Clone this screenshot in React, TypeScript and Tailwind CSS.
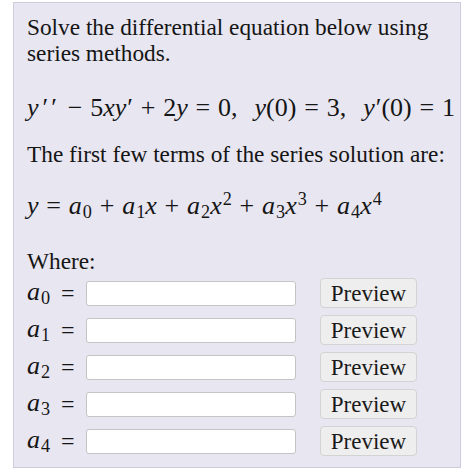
import React from 'react';

const serif = { fontFamily: '"Liberation Serif", "DejaVu Serif", serif' };

const V: React.FC<{ children: React.ReactNode }> = ({ children }) => (
  <span className="italic">{children}</span>
);

const Op: React.FC<{ children: React.ReactNode }> = ({ children }) => (
  <span className="mx-[0.3em]">{children}</span>
);

const Sub: React.FC<{ children: React.ReactNode }> = ({ children }) => (
  <span className="ml-[1px] align-[-0.22em] text-[0.7em] leading-none">{children}</span>
);

const Sup: React.FC<{ children: React.ReactNode }> = ({ children }) => (
  <span className="ml-[1px] align-[0.5em] text-[0.7em] leading-none">{children}</span>
);

const coefficients = ['0', '1', '2', '3', '4'];

export default function App() {
  return (
    <div className="min-h-screen bg-white pt-[2px]" style={serif}>
      <div className="mx-[13px] overflow-hidden border border-[#cdcbdc] bg-[#e8e6f1] pt-[11px] pb-[11px] pl-[13px] text-[#151515]">
        <p className="text-[23.3px] leading-[26px]">
          Solve the differential equation below using series methods.
        </p>

        <p className="mt-[27px] whitespace-nowrap text-[26px] leading-[30px]">
          <V>y</V>
          <span className="ml-[4px] tracking-[3px]">′′</span>
          <Op>−</Op>5<V>xy</V>
          <span className="ml-[1px]">′</span>
          <Op>+</Op>2<V>y</V>
          <Op>=</Op>0,
          <span className="ml-[17px]">
            <V>y</V>(0)
          </span>
          <Op>=</Op>3,
          <span className="ml-[17px]">
            <V>y</V>
            <span className="ml-[1px]">′</span>(0)
          </span>
          <Op>=</Op>1
        </p>

        <p className="mt-[17px] text-[23.3px] leading-[28px]">
          The first few terms of the series solution are:
        </p>

        <p className="mt-[22px] whitespace-nowrap text-[26px] leading-[30px]">
          <V>y</V>
          <Op>=</Op>
          <V>a</V>
          <Sub>0</Sub>
          <Op>+</Op>
          <V>a</V>
          <Sub>1</Sub>
          <V>x</V>
          <Op>+</Op>
          <V>a</V>
          <Sub>2</Sub>
          <V>x</V>
          <Sup>2</Sup>
          <Op>+</Op>
          <V>a</V>
          <Sub>3</Sub>
          <V>x</V>
          <Sup>3</Sup>
          <Op>+</Op>
          <V>a</V>
          <Sub>4</Sub>
          <V>x</V>
          <Sup>4</Sup>
        </p>

        <p className="mt-[27px] text-[23.3px] leading-[26px]">Where:</p>

        <div className="mt-[4px] flex flex-col gap-[7px]">
          {coefficients.map((n) => (
            <div key={n} className="flex h-[30px] items-center">
              <span className="w-[34px] text-[26px] leading-none">
                <V>a</V>
                <Sub>{n}</Sub>
              </span>
              <span className="w-[25px] text-[24px] leading-none">=</span>
              <input
                type="text"
                className="h-[25px] w-[210px] rounded-[3px] border border-[#c4c4c4] bg-white"
              />
              <button
                type="button"
                className="ml-[24px] h-[30px] w-[97px] rounded-[4px] border border-[#d3d3d3] bg-[#eeeeee] text-[23px] leading-none text-[#1a1a1a]"
                style={serif}
              >
                Preview
              </button>
            </div>
          ))}
        </div>
      </div>
    </div>
  );
}
